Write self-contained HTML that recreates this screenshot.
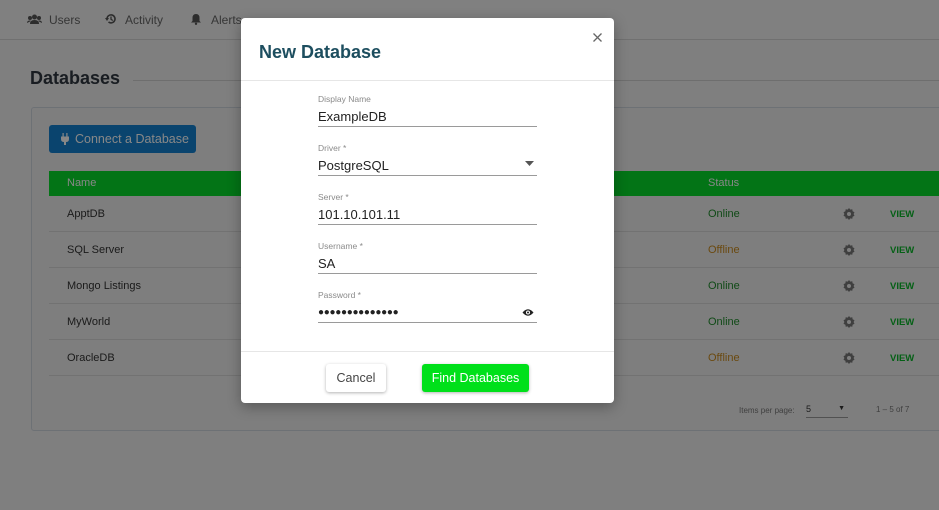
<!DOCTYPE html>
<html><head><style>
*{box-sizing:border-box;margin:0;padding:0}
body{width:939px;height:510px;overflow:hidden;background:#f0f0f0;font-family:"Liberation Sans",sans-serif;position:relative}
.abs{position:absolute}
.nav{left:0;top:0;width:939px;height:40px;border-bottom:1px solid #d4d4d4;background:#f2f2f2}
.nav span{position:absolute;top:13px;font-size:12px;color:#666}
h1{position:absolute;left:30px;top:68px;font-size:18px;color:#303840;font-weight:bold}
.hr{left:133px;top:80px;width:806px;height:1px;background:#d0d0d0}
.card{left:31px;top:107px;width:920px;height:324px;border:1px solid #cfd6de;border-radius:3px;background:#efefef}
.btn{left:49px;top:125px;width:147px;height:28px;background:#1480d0;border-radius:3px;color:#fff;font-size:12.5px;line-height:28px;padding-left:26px}
.th{left:49px;top:171px;width:890px;height:25px;background:#06dc2a;color:#fff;font-size:11px;line-height:25px}
.row{left:49px;width:890px;height:36px;border-bottom:1px solid #d8d8d8;font-size:11px;line-height:37px;color:#333}
.row .n{position:absolute;left:18px}
.row .s{position:absolute;left:659px}
.row .g{position:absolute;left:794px;top:12px}
.row .v{position:absolute;left:841px;color:#0bb52a;font-weight:bold;font-size:9.5px}
.on{color:#1f8c2c}.off{color:#c98a1e}
.ov{left:0;top:0;width:939px;height:510px;background:rgba(0,0,0,0.47)}
.modal{left:241px;top:18px;width:373px;height:385px;background:#fff;border-radius:4px;box-shadow:0 4px 14px rgba(0,0,0,.3)}
.mt{position:absolute;left:18px;top:24px;font-size:18px;font-weight:bold;color:#1d4e5f}
.x{position:absolute;right:12px;top:15px}
.d1{position:absolute;left:0;top:62px;width:373px;height:1px;background:#e6e6e6}
.d2{position:absolute;left:0;top:333px;width:373px;height:1px;background:#e6e6e6}
.f{position:absolute;left:77px;width:219px;border-bottom:1px solid #9a9a9a;height:34px}
.f .l{position:absolute;top:1px;font-size:8.5px;color:#8a8a8a}
.f .v{position:absolute;top:16px;font-size:13px;color:#222}
.cancel{position:absolute;left:85px;top:346px;width:60px;height:28px;border-radius:3px;box-shadow:0 1px 3px rgba(0,0,0,.3);font-size:12.5px;color:#444;text-align:center;line-height:28px}
.find{position:absolute;left:181px;top:346px;width:107px;height:28px;border-radius:3px;background:#00e01a;box-shadow:0 1px 3px rgba(0,0,0,.3);font-size:12.5px;color:#fff;text-align:center;line-height:28px}
</style></head><body>
<div class="abs nav">
<svg style="position:absolute;left:27px;top:14px" width="15" height="11" viewBox="0 0 15 11"><circle cx="7.5" cy="3" r="2.5" fill="#555"/><circle cx="3" cy="4" r="2" fill="#555"/><circle cx="12" cy="4" r="2" fill="#555"/><path d="M3 10Q3 6 7.5 6Q12 6 12 10Z M0 9Q0 6.5 3 6.5L4 7Z M15 9Q15 6.5 12 6.5L11 7Z" fill="#555"/></svg>
<span style="left:49px">Users</span>
<svg style="position:absolute;left:105px;top:13px" width="12" height="12" viewBox="0 0 12 12"><path d="M2 6A4 4 0 1 1 3.5 9" fill="none" stroke="#555" stroke-width="1.6"/><path d="M0 5L2 8L4 5Z" fill="#555"/><path d="M6 3.5V6.3L7.8 7.5" fill="none" stroke="#555" stroke-width="1.3"/></svg>
<span style="left:125px">Activity</span>
<svg style="position:absolute;left:191px;top:13px" width="10" height="12" viewBox="0 0 10 12"><path d="M5 1Q8.5 1 8.5 5V8L10 9.5H0L1.5 8V5Q1.5 1 5 1Z" fill="#555"/><circle cx="5" cy="10.8" r="1.2" fill="#555"/></svg>
<span style="left:211px">Alerts</span>
</div>
<h1>Databases</h1>
<div class="abs hr"></div>
<div class="abs card"></div>
<div class="abs btn"><svg style="position:absolute;left:12px;top:8px" width="8" height="13" viewBox="0 0 8 13"><rect x="1.5" y="0" width="1.2" height="3.5" fill="#fff"/><rect x="5.3" y="0" width="1.2" height="3.5" fill="#fff"/><path d="M0 3.5H8V6Q8 9 5 9V12H3V9Q0 9 0 6Z" fill="#fff"/></svg>Connect a Database</div>
<div class="abs th"><span style="position:absolute;left:18px">Name</span><span style="position:absolute;left:659px">Status</span></div>
<div class="abs row" style="top:196px"><span class="n">ApptDB</span><span class="s on">Online</span><svg class="g" width="12" height="12" viewBox="0 0 12 12"><path d="M6 0L7.3 1.6 9.3 1.2 9.6 3.2 11.5 4.2 10.6 6 11.5 7.8 9.6 8.8 9.3 10.8 7.3 10.4 6 12 4.7 10.4 2.7 10.8 2.4 8.8 .5 7.8 1.4 6 .5 4.2 2.4 3.2 2.7 1.2 4.7 1.6Z" fill="#777"/><circle cx="6" cy="6" r="2" fill="#efefef"/></svg><span class="v">VIEW</span></div>
<div class="abs row" style="top:232px"><span class="n">SQL Server</span><span class="s off">Offline</span><svg class="g" width="12" height="12" viewBox="0 0 12 12"><path d="M6 0L7.3 1.6 9.3 1.2 9.6 3.2 11.5 4.2 10.6 6 11.5 7.8 9.6 8.8 9.3 10.8 7.3 10.4 6 12 4.7 10.4 2.7 10.8 2.4 8.8 .5 7.8 1.4 6 .5 4.2 2.4 3.2 2.7 1.2 4.7 1.6Z" fill="#777"/><circle cx="6" cy="6" r="2" fill="#efefef"/></svg><span class="v">VIEW</span></div>
<div class="abs row" style="top:268px"><span class="n">Mongo Listings</span><span class="s on">Online</span><svg class="g" width="12" height="12" viewBox="0 0 12 12"><path d="M6 0L7.3 1.6 9.3 1.2 9.6 3.2 11.5 4.2 10.6 6 11.5 7.8 9.6 8.8 9.3 10.8 7.3 10.4 6 12 4.7 10.4 2.7 10.8 2.4 8.8 .5 7.8 1.4 6 .5 4.2 2.4 3.2 2.7 1.2 4.7 1.6Z" fill="#777"/><circle cx="6" cy="6" r="2" fill="#efefef"/></svg><span class="v">VIEW</span></div>
<div class="abs row" style="top:304px"><span class="n">MyWorld</span><span class="s on">Online</span><svg class="g" width="12" height="12" viewBox="0 0 12 12"><path d="M6 0L7.3 1.6 9.3 1.2 9.6 3.2 11.5 4.2 10.6 6 11.5 7.8 9.6 8.8 9.3 10.8 7.3 10.4 6 12 4.7 10.4 2.7 10.8 2.4 8.8 .5 7.8 1.4 6 .5 4.2 2.4 3.2 2.7 1.2 4.7 1.6Z" fill="#777"/><circle cx="6" cy="6" r="2" fill="#efefef"/></svg><span class="v">VIEW</span></div>
<div class="abs row" style="top:340px"><span class="n">OracleDB</span><span class="s off">Offline</span><svg class="g" width="12" height="12" viewBox="0 0 12 12"><path d="M6 0L7.3 1.6 9.3 1.2 9.6 3.2 11.5 4.2 10.6 6 11.5 7.8 9.6 8.8 9.3 10.8 7.3 10.4 6 12 4.7 10.4 2.7 10.8 2.4 8.8 .5 7.8 1.4 6 .5 4.2 2.4 3.2 2.7 1.2 4.7 1.6Z" fill="#777"/><circle cx="6" cy="6" r="2" fill="#efefef"/></svg><span class="v">VIEW</span></div>
<div class="abs" style="left:739px;top:406px;font-size:8px;color:#777">Items per page:</div>
<div class="abs" style="left:806px;top:404px;width:42px;border-bottom:1px solid #999;font-size:9px;color:#333;height:14px">5<span style="position:absolute;right:3px;top:1px;font-size:7px">&#9660;</span></div>
<div class="abs" style="left:876px;top:405px;font-size:8px;color:#777">1 – 5 of 7</div>
<div class="abs ov"></div>
<div class="abs modal">
<div class="mt">New Database</div>
<svg class="x" width="9" height="9" viewBox="0 0 9 9"><path d="M0.5 0.5L8.5 8.5M8.5 0.5L0.5 8.5" stroke="#666" stroke-width="1.3"/></svg>
<div class="d1"></div>
<div class="f" style="top:75px"><span class="l">Display Name</span><span class="v">ExampleDB</span></div>
<div class="f" style="top:124px"><span class="l">Driver *</span><span class="v">PostgreSQL</span><svg style="position:absolute;right:3px;top:19px" width="9" height="5" viewBox="0 0 9 5"><path d="M0 0H9L4.5 5Z" fill="#555"/></svg></div>
<div class="f" style="top:173px"><span class="l">Server *</span><span class="v">101.10.101.11</span></div>
<div class="f" style="top:222px"><span class="l">Username *</span><span class="v">SA</span></div>
<div class="f" style="top:271px"><span class="l">Password *</span><span class="v" style="font-size:10px;top:18px;letter-spacing:-0.3px">&#9679;&#9679;&#9679;&#9679;&#9679;&#9679;&#9679;&#9679;&#9679;&#9679;&#9679;&#9679;&#9679;&#9679;</span>
<svg style="position:absolute;right:3px;top:19px" width="12" height="9" viewBox="0 0 12 9"><path d="M0.5 4.5Q6 -2 11.5 4.5Q6 11 0.5 4.5Z" fill="#222"/><circle cx="6" cy="4.5" r="2" fill="#fff"/><circle cx="6" cy="4.5" r="1" fill="#222"/></svg></div>
<div class="d2"></div>
<div class="cancel">Cancel</div>
<div class="find">Find Databases</div>
</div>
</body></html>
